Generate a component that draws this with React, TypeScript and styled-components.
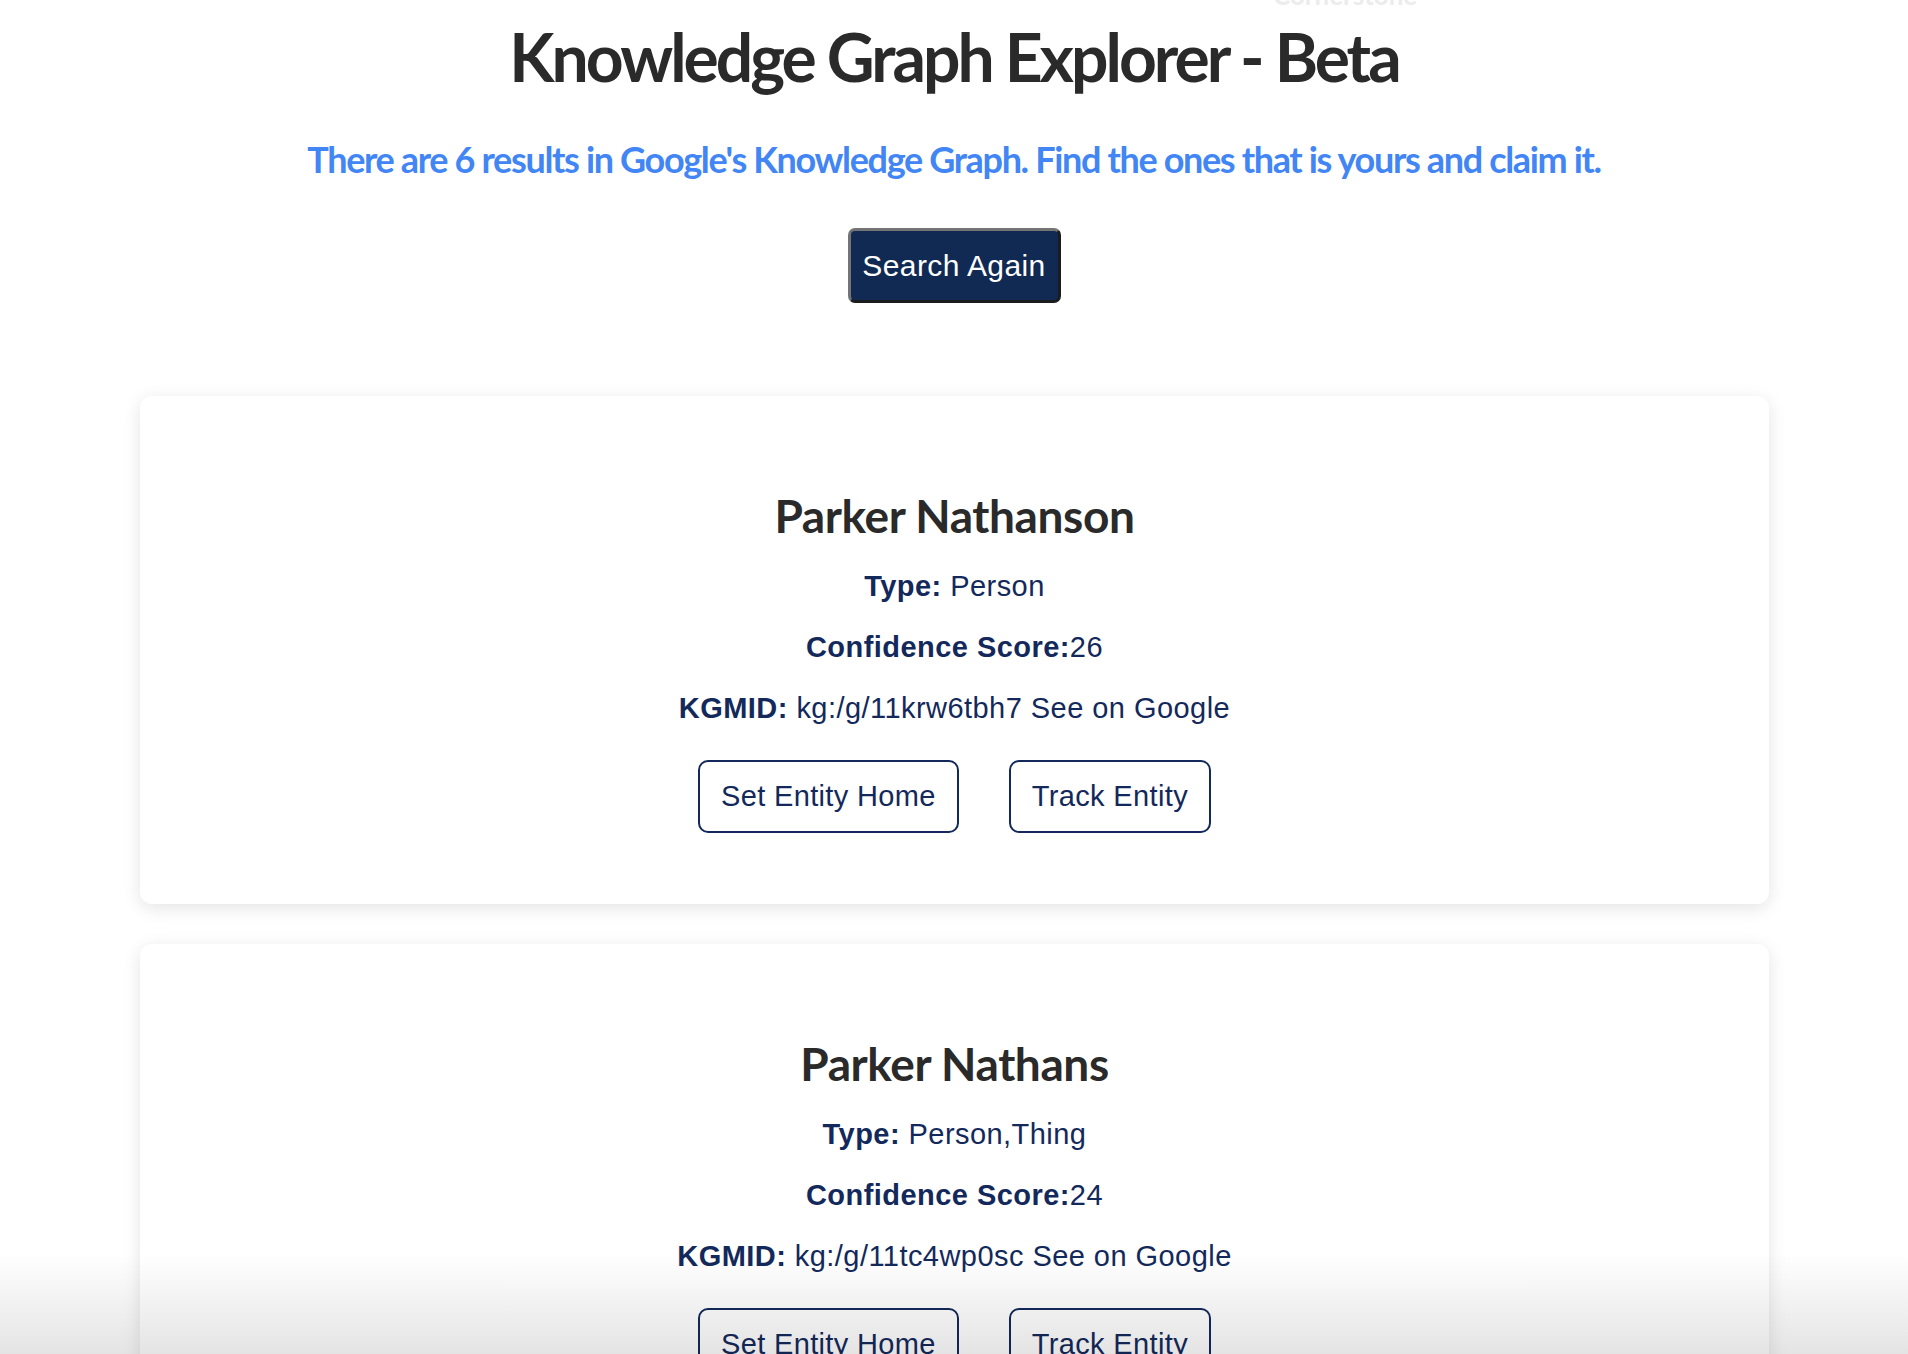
import React from "react";
import styled, { createGlobalStyle } from "styled-components";

type Entity = {
  name: string;
  type: string;
  score: number;
  kgmid: string;
};

const results: Entity[] = [
  { name: "Parker Nathanson", type: "Person", score: 26, kgmid: "kg:/g/11krw6tbh7" },
  { name: "Parker Nathans", type: "Person,Thing", score: 24, kgmid: "kg:/g/11tc4wp0sc" },
];

const ResultCard = ({ entity }: { entity: Entity }) => (
  <Card>
    <CardTitle>{entity.name}</CardTitle>
    <InfoLine>
      <b>Type:</b> {entity.type}
    </InfoLine>
    <InfoLine>
      <b>Confidence Score:</b>{entity.score}
    </InfoLine>
    <InfoLine>
      <b>KGMID:</b> {entity.kgmid} <GoogleLink href="#">See on Google</GoogleLink>
    </InfoLine>
    <ButtonRow>
      <OutlineButton>Set Entity Home</OutlineButton>
      <OutlineButton>Track Entity</OutlineButton>
    </ButtonRow>
  </Card>
);

const App = () => {
  return (
    <>
      <GlobalStyle />
      <Page>
        <TopMark>Cornerstone</TopMark>
        <Title>Knowledge Graph Explorer - Beta</Title>
        <Subtitle>
          There are 6 results in Google's Knowledge Graph. Find the ones that is yours and claim it.
        </Subtitle>
        <SearchButton>Search Again</SearchButton>
        <ResultList>
          {results.map((r) => (
            <ResultCard key={r.kgmid} entity={r} />
          ))}
        </ResultList>
      </Page>
      <BottomFade />
    </>
  );
};

const GlobalStyle = createGlobalStyle`
  html, body {
    margin: 0;
    padding: 0;
    background: #ffffff;
  }
  body {
    font-family: "Liberation Sans", Arial, sans-serif;
    overflow: hidden;
  }
`;

const Page = styled.div`
  position: relative;
  display: flex;
  flex-direction: column;
  align-items: center;
  padding-bottom: 40px;
`;

// faint header text, mostly scrolled out of view
const TopMark = styled.span`
  position: absolute;
  top: -21px;
  left: 1273px;
  font-family: Lato, sans-serif;
  font-weight: 700;
  font-size: 26px;
  color: #ececec;
`;

const Title = styled.h1`
  margin: 17px 0 0;
  font-family: Lato, sans-serif;
  font-weight: 700;
  font-size: 66px;
  line-height: 79px;
  letter-spacing: -3px;
  color: #2a2a2a;
`;

const Subtitle = styled.h2`
  margin: 42px 0 0;
  font-family: Lato, sans-serif;
  font-weight: 700;
  font-size: 36px;
  line-height: 43px;
  letter-spacing: -1.35px;
  color: #4285f4;
`;

const SearchButton = styled.button`
  flex-shrink: 0;
  margin-top: 47px;
  width: 213px;
  height: 75px;
  padding: 0;
  background: #102a54;
  color: #ffffff;
  border: 3px solid;
  border-color: #747474 #1c1c1c #1c1c1c #747474;
  border-radius: 7px;
  font-family: "Liberation Sans", Arial, sans-serif;
  font-size: 30px;
  letter-spacing: 0.4px;
  cursor: pointer;
`;

const ResultList = styled.div`
  align-self: stretch;
  display: flex;
  flex-direction: column;
  gap: 40px;
  margin-top: 93px;
  padding: 0 139px 0 140px;
`;

const Card = styled.div`
  flex-shrink: 0;
  display: flex;
  flex-direction: column;
  align-items: center;
  background: #ffffff;
  border-radius: 12px;
  box-shadow: 0 4px 18px rgba(0, 0, 0, 0.11);
  padding: 92px 40px 71px;
  text-align: center;
`;

const CardTitle = styled.h3`
  margin: 0;
  font-family: Lato, sans-serif;
  font-weight: 700;
  font-size: 46px;
  line-height: 55px;
  letter-spacing: -0.4px;
  color: #2a2a2a;
`;

const InfoLine = styled.p`
  margin: 27px 0 0;
  font-size: 29px;
  line-height: 34px;
  letter-spacing: 0.45px;
  color: #13295b;

  &:first-of-type {
    margin-top: 26px;
  }

  b {
    font-weight: 700;
  }
`;

const GoogleLink = styled.a`
  color: inherit;
  text-decoration: none;
`;

const ButtonRow = styled.div`
  display: flex;
  gap: 50px;
  margin-top: 35px;
`;

const OutlineButton = styled.button`
  height: 73px;
  padding: 0 21px;
  background: #ffffff;
  border: 2px solid #13295b;
  border-radius: 10px;
  color: #13295b;
  font-family: "Liberation Sans", Arial, sans-serif;
  font-size: 29px;
  letter-spacing: 0.35px;
  cursor: pointer;
`;

// soft grey shade at the bottom edge of the window
const BottomFade = styled.div`
  position: fixed;
  left: 0;
  right: 0;
  bottom: 0;
  height: 100px;
  background: linear-gradient(to bottom, #ffffff, #e4e4e4);
  mix-blend-mode: multiply;
  pointer-events: none;
`;

export default App;
